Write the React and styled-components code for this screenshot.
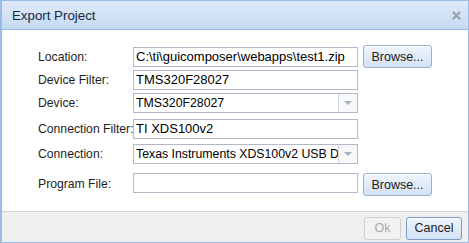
import React from 'react';
import styled, { createGlobalStyle } from 'styled-components';

const GlobalStyle = createGlobalStyle`
    html, body { margin: 0; padding: 0; background: #fff; }
    body { font-family: Tahoma, "Liberation Sans", Arial, sans-serif; font-size: 12px; color: #222; }
`

const borderBlue = '#99bbe8',
    inputBorder = '#b5b8c8'

export default function App(){
    return (
        <>
            <GlobalStyle/>
            <Win>
                <TitleBar>
                    <Title>Export Project</Title>
                    <CloseBtn>
                        <svg width="9" height="9" viewBox="0 0 9 9">
                            <path d="M1.5 1.5 L7.5 7.5 M7.5 1.5 L1.5 7.5" stroke="#9aa0a8" strokeWidth="2.2" strokeLinecap="round"/>
                        </svg>
                    </CloseBtn>
                </TitleBar>
                <Body>
                    <Row $top={15} $h={23}>
                        <Label>Location:</Label>
                        <Field>C:\ti\guicomposer\webapps\test1.zip</Field>
                        <Button>Browse...</Button>
                    </Row>
                    <Row $top={2}>
                        <Label>Device Filter:</Label>
                        <Field>TMS320F28027</Field>
                    </Row>
                    <Row $top={3}>
                        <Label>Device:</Label>
                        <Select>
                            <SelectText>TMS320F28027</SelectText>
                            <Trigger><Arrow/></Trigger>
                        </Select>
                    </Row>
                    <Row $top={6}>
                        <Label>Connection Filter:</Label>
                        <Field>TI XDS100v2</Field>
                    </Row>
                    <Row $top={5}>
                        <Label>Connection:</Label>
                        <Select>
                            <SelectText>Texas Instruments XDS100v2 USB D</SelectText>
                            <Trigger><Arrow/></Trigger>
                        </Select>
                    </Row>
                    <Row $top={9} $h={23} $align="flex-start">
                        <Label $pt={4}>Program File:</Label>
                        <Field></Field>
                        <Button>Browse...</Button>
                    </Row>
                </Body>
                <Footer>
                    <Button disabled $w={37}>Ok</Button>
                    <Button $w={56} $focus>Cancel</Button>
                    <Grip/>
                </Footer>
            </Win>
        </>
    )
}

const Win = styled.div`
    width: 469px;
    height: 243px;
    box-sizing: border-box;
    border: 1px solid ${borderBlue};
    border-left-width: 2px;
    display: flex;
    flex-direction: column;
    overflow: hidden;
    position: relative;
`

const TitleBar = styled.div`
    height: 28px;
    flex: none;
    display: flex;
    align-items: center;
    justify-content: space-between;
    padding: 0 6px 0 10px;
    background: linear-gradient(#dfeaf8, #c5daf2);
    border-bottom: 1px solid ${borderBlue};
`

const Title = styled.div`
    font-size: 13.3px;
    color: #15283f;
`

const CloseBtn = styled.div`
    width: 12px;
    height: 12px;
    display: flex;
    align-items: center;
    justify-content: center;
`

const Body = styled.div`
    flex: 1;
    padding-left: 36px;
    background: #fff;
`

const Row = styled.div`
    display: flex;
    align-items: ${p => p.$align || 'center'};
    height: ${p => p.$h || 20}px;
    margin-top: ${p => p.$top}px;
`

const Label = styled.div`
    width: 95px;
    flex: none;
    white-space: nowrap;
    padding-top: ${p => p.$pt || 0}px;
    font-size: 12.2px;
    color: #1e1e1e;
`

const Field = styled.div`
    width: 225px;
    height: 20px;
    box-sizing: border-box;
    border: 1px solid ${inputBorder};
    padding: 0 2px;
    font-size: 13px;
    line-height: 18px;
    color: #000;
    white-space: nowrap;
    overflow: hidden;
    background: #fff;
`

const Select = styled.div`
    width: 225px;
    height: 20px;
    box-sizing: border-box;
    border: 1px solid ${inputBorder};
    display: flex;
`

const SelectText = styled.div`
    flex: 1;
    min-width: 0;
    padding: 0 2px;
    font-size: 12.3px;
    line-height: 18px;
    white-space: nowrap;
    overflow: hidden;
    color: #000;
`

const Trigger = styled.div`
    width: 18px;
    flex: none;
    border-left: 1px solid #d6d9e0;
    background: #f7f8fa;
    display: flex;
    align-items: center;
    justify-content: center;
`

const Arrow = styled.div`
    width: 0;
    height: 0;
    border-left: 4px solid transparent;
    border-right: 4px solid transparent;
    border-top: 4px solid #a7b1c2;
`

const Button = styled.button`
    width: ${p => p.$w || 69}px;
    height: ${p => p.$h || 23}px;
    margin-left: 5px;
    padding: 0;
    box-sizing: border-box;
    border-radius: 3px;
    font-family: Tahoma, "Liberation Sans", Arial, sans-serif;
    font-size: 12.5px;
    color: #222;
    border: 1px solid ${p => p.$focus ? '#7c9ac2' : '#98b0cf'};
    background: linear-gradient(#eef4fc, #d3e2f5);
    box-shadow: inset 0 1px 0 #fff;
    &:disabled{
        color: #aaa;
        border-color: #cfcfcf;
        background: #f2f2f2;
        box-shadow: none;
    }
`

const Footer = styled.div`
    height: 31px;
    flex: none;
    box-sizing: border-box;
    border-top: 1px solid #d3d3d3;
    background: #efefef;
    display: flex;
    align-items: center;
    justify-content: flex-end;
    padding: 2px 6px 0 0;
    position: relative;
`

const Grip = styled.div`
    position: absolute;
    right: 0;
    bottom: 0;
    width: 5px;
    height: 6px;
    background-image: radial-gradient(#555 45%, transparent 50%);
    background-size: 2px 2px;
`
